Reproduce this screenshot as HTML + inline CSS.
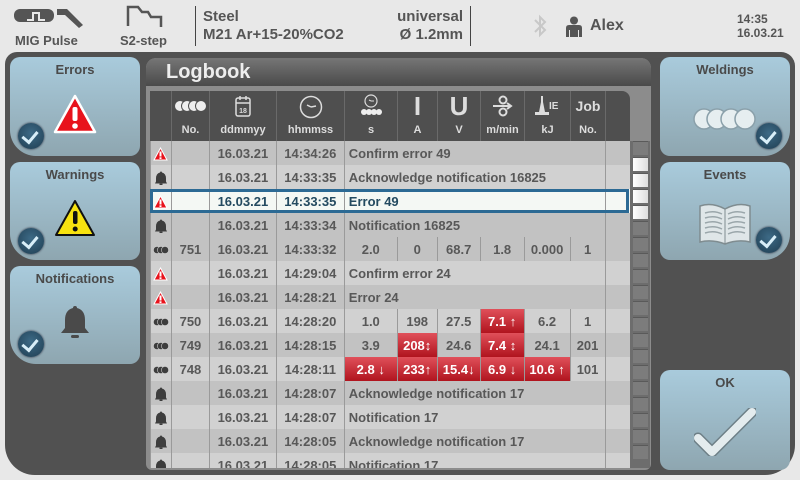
<!DOCTYPE html>
<html><head><meta charset="utf-8"><style>
*{margin:0;padding:0;box-sizing:border-box}
body{width:800px;height:480px;background:#e8e8e8;font-family:"Liberation Sans",sans-serif;font-weight:bold;color:#555;position:relative;overflow:hidden}
.a{position:absolute}
.top{font-size:15px;color:#555}
.frame{left:5px;top:52px;width:790px;height:423px;background:#515151;border-radius:12px 14px 30px 30px}
.btn{position:absolute;width:130px;background:linear-gradient(#a9cbdc,#8ea6b0);border-radius:10px 10px 10px 26px;text-align:center;font-size:13px;color:#4a4a4a;padding-top:5px}
.chk{position:absolute;width:26px;height:26px;border-radius:50%;background:radial-gradient(circle at 50% 40%,#3d6a86,#1f3e52);box-shadow:0 0 2px #223}
.chk:after{content:"";position:absolute;left:7px;top:5px;width:7px;height:12px;border:solid #d8eef8;border-width:0 3px 3px 0;transform:rotate(40deg)}
.panel{left:146px;top:58px;width:505px;height:412px;background:#8c8c8c;border-radius:10px 10px 6px 6px;overflow:hidden}
.ptitle{left:0;top:0;width:505px;height:28px;background:linear-gradient(#767676,#4a4a4a);color:#eee;font-size:20px;padding:3px 0 0 20px;border-radius:10px 10px 0 0}
table{border-collapse:collapse;table-layout:fixed}
td{height:24px;font-size:13px;text-align:center;border-left:1px solid #9a9a9a;white-space:nowrap;overflow:hidden;padding:0;color:#585858}
td.l{text-align:left;padding-left:4px}
tr.d td{background:#c2c2c2}
tr.li td{background:#d1d1d1}
tr.s td{background:#f4f8f4;color:#234a60}
td.r{background:linear-gradient(#e0505a,#b0141e)!important;color:#fff!important}
.hd{left:4px;top:33px;width:480px;height:50px;background:#4f4f4f;border-radius:0 8px 0 0;color:#ddd;font-size:11px}
.hd div{position:absolute;top:0;height:50px;border-left:1px solid #6a6a6a;text-align:center}
.hd span{position:absolute;bottom:5px;left:0;right:0}
.sb{left:484px;top:83px;width:20px;height:327px;background:#6d6d6d}
.sb i{display:block;margin:0 2px 2px 3px;height:14px;background:#7c7c7c;border-top:1px solid #5a5a5a}
.sb i.w{background:linear-gradient(90deg,#fff,#ddd)}
</style></head><body>
<svg class="a" style="left:14px;top:8px" width="72" height="20"><rect x="0" y="1" width="40" height="13" rx="6" fill="#555"/><path d="M13 12h6v-7h6v7h6" stroke="#e8e8e8" stroke-width="2" fill="none"/><path d="M43 1h10l16 16l-4 3l-14-13h-8z" fill="#555"/></svg>
<div class="a top" style="left:15px;top:33px;font-size:13px">MIG Pulse</div>
<svg class="a" style="left:126px;top:5px" width="38" height="22"><path d="M2 21V2h10l4 5h6l3 5h10v10" stroke="#555" stroke-width="2.5" fill="none"/></svg>
<div class="a top" style="left:120px;top:33px;font-size:13px">S2-step</div>
<div class="a" style="left:195px;top:6px;width:1px;height:40px;background:#444"></div>
<div class="a top" style="left:203px;top:8px;line-height:18px">Steel<br>M21 Ar+15-20%CO2</div>
<div class="a top" style="left:380px;top:8px;line-height:18px;text-align:right;width:83px">universal<br>Ø 1.2mm</div>
<div class="a" style="left:470px;top:6px;width:1px;height:40px;background:#444"></div>
<svg class="a" style="left:532px;top:14px" width="16" height="24"><path d="M3 6l10 10l-5 5V3l5 5l-10 10" stroke="#c8c8c8" stroke-width="2" fill="none"/></svg>
<svg class="a" style="left:565px;top:16px" width="18" height="21"><circle cx="9" cy="4.5" r="4" fill="#555"/><path d="M1 21V12q0-3 3-3h10q3 0 3 3v9h-3v-7h-1v7H5v-7H4v7z" fill="#555"/></svg>
<div class="a top" style="left:590px;top:17px;font-size:16px">Alex</div>
<div class="a top" style="left:737px;top:12px;font-size:12px;line-height:14px">14:35<br>16.03.21</div>

<div class="a frame"></div>
<div class="btn" style="left:10px;top:57px;height:99px">Errors
<svg class="a" style="left:43px;top:37px" width="44" height="40"><path d="M22 2L42 38H2z" fill="#e8131c" stroke="#fff" stroke-width="2.5" stroke-linejoin="round"/><rect x="19.5" y="13" width="5" height="14" rx="2" fill="#fff"/><circle cx="22" cy="32" r="2.8" fill="#fff"/></svg>
<div class="chk" style="left:8px;top:66px"></div></div>
<div class="btn" style="left:10px;top:162px;height:98px">Warnings
<svg class="a" style="left:44px;top:37px" width="42" height="38"><path d="M21 2L40 36H2z" fill="#f7e210" stroke="#111" stroke-width="2" stroke-linejoin="round"/><rect x="19" y="12" width="4.5" height="13" rx="2" fill="#111"/><circle cx="21.2" cy="30" r="2.5" fill="#111"/></svg>
<div class="chk" style="left:8px;top:66px"></div></div>
<div class="btn" style="left:10px;top:266px;height:98px">Notifications
<svg class="a" style="left:50px;top:38px" width="30" height="36"><path d="M15 2q2 0 2 2q8 2 8 12v8l4 5H1l4-5v-8q0-10 8-12q0-2 2-2z" fill="#4a4a4a"/><rect x="11" y="31" width="8" height="3" rx="1.5" fill="#4a4a4a"/></svg>
<div class="chk" style="left:8px;top:65px"></div></div>
<div class="btn" style="left:660px;top:57px;height:99px;border-radius:10px 10px 26px 10px">Weldings
<svg class="a" style="left:32px;top:50px" width="66" height="24"><g fill="#e6eef0" stroke="#8aa0aa" stroke-width="1.5"><circle cx="12" cy="12" r="10"/><circle cx="25" cy="12" r="10"/><circle cx="39" cy="12" r="10"/><circle cx="53" cy="12" r="10"/></g></svg>
<div class="chk" style="left:96px;top:66px"></div></div>
<div class="btn" style="left:660px;top:162px;height:98px;border-radius:10px 10px 26px 10px">Events
<svg class="a" style="left:38px;top:40px" width="54" height="44"><path d="M2 4q12-4 25 3q13-7 25-3v36q-12-3-25 2q-13-5-25-2z" fill="#dfe6e8" stroke="#7f8c90" stroke-width="1.5"/><path d="M27 7v35" stroke="#7f8c90"/><g stroke="#9aa6aa" stroke-width="1.5" fill="none"><path d="M7 11q9-3 17 1M7 16q9-3 17 1M7 21q9-3 17 1M7 26q9-3 17 1M7 31q9-3 17 1M30 12q8-4 17-1M30 17q8-4 17-1M30 22q8-4 17-1M30 27q8-4 17-1M30 32q8-4 17-1"/></g></svg>
<div class="chk" style="left:96px;top:65px"></div></div>
<div class="btn" style="left:660px;top:370px;height:100px;border-radius:10px">OK
<svg class="a" style="left:34px;top:38px" width="62" height="48"><path d="M4 30l14 14l40-40" stroke="#6d7f86" stroke-width="11" stroke-linecap="round" stroke-linejoin="round" fill="none"/><path d="M4 30l14 14l40-40" stroke="#e4ecee" stroke-width="8" stroke-linecap="round" stroke-linejoin="round" fill="none"/></svg></div>

<div class="a panel">
<div class="a ptitle">Logbook</div>
<div class="a hd">
<div style="left:0;width:21px;border:none"></div>
<div style="left:21px;width:38px"><svg style="margin-top:9px" width="34" height="12"><g fill="#eee" stroke="#4f4f4f"><circle cx="6" cy="6" r="5.5"/><circle cx="13" cy="6" r="5.5"/><circle cx="20" cy="6" r="5.5"/><circle cx="27" cy="6" r="5.5"/></g></svg><span>No.</span></div>
<div style="left:59px;width:67px"><svg style="margin-top:4px" width="16" height="22"><rect x="1" y="3" width="14" height="18" rx="2" fill="none" stroke="#ddd" stroke-width="1.5"/><path d="M1 8h14M5 1v4M11 1v4" stroke="#ddd" stroke-width="1.5"/><text x="8" y="18" font-size="7" fill="#ddd" text-anchor="middle" font-family="Liberation Sans">18</text></svg><span>ddmmyy</span></div>
<div style="left:126px;width:68px"><svg style="margin-top:4px" width="24" height="24"><circle cx="12" cy="12" r="10.5" fill="none" stroke="#ddd" stroke-width="1.5"/><path d="M12 12l-4-2M12 12l5-1" stroke="#ddd" stroke-width="1.5"/></svg><span>hhmmss</span></div>
<div style="left:194px;width:53px"><svg style="margin-top:3px" width="32" height="22"><circle cx="16" cy="7" r="6" fill="none" stroke="#ddd" stroke-width="1.2"/><path d="M16 7l-2-1M16 7l3 0" stroke="#ddd"/><g fill="#eee"><circle cx="9" cy="18" r="3"/><circle cx="14" cy="18" r="3"/><circle cx="19" cy="18" r="3"/><circle cx="24" cy="18" r="3"/></g></svg><span>s</span></div>
<div style="left:247px;width:40px"><b style="font-size:26px;line-height:30px;color:#ddd">I</b><span>A</span></div>
<div style="left:287px;width:43px"><b style="font-size:26px;line-height:30px;color:#ddd">U</b><span>V</span></div>
<div style="left:330px;width:44px"><svg style="margin-top:4px" width="22" height="22"><circle cx="11" cy="5" r="3.5" fill="none" stroke="#ddd" stroke-width="2"/><circle cx="11" cy="17" r="3.5" fill="none" stroke="#ddd" stroke-width="2"/><path d="M1 11h17M15 8l4 3l-4 3" stroke="#ddd" stroke-width="2" fill="none"/></svg><span>m/min</span></div>
<div style="left:374px;width:46px"><svg style="margin-top:4px" width="32" height="22"><path d="M9 1h2v6l2 10h4v3H3v-3h4l2-10z" fill="#ddd"/><text x="17" y="14" font-size="10" fill="#ddd" font-family="Liberation Sans" font-weight="bold">IE</text></svg><span>kJ</span></div>
<div style="left:420px;width:35px"><b style="font-size:14px;line-height:30px;color:#ddd">Job</b><span>No.</span></div>
<div style="left:455px;width:25px"></div>
</div>
<div class="a" style="left:4px;top:83px;width:480px;height:327px;overflow:hidden">
<table>
<colgroup><col style="width:21px"><col style="width:38px"><col style="width:67px"><col style="width:68px"><col style="width:53px"><col style="width:40px"><col style="width:43px"><col style="width:44px"><col style="width:46px"><col style="width:35px"><col style="width:25px"></colgroup>
<tr class="d"><td class="e"></td><td></td><td>16.03.21</td><td>14:34:26</td><td class="l" colspan="6">Confirm error 49</td><td></td></tr>
<tr class="li"><td class="b"></td><td></td><td>16.03.21</td><td>14:33:35</td><td class="l" colspan="6">Acknowledge notification 16825</td><td></td></tr>
<tr class="s"><td class="e"></td><td></td><td>16.03.21</td><td>14:33:35</td><td class="l" colspan="6">Error 49</td><td></td></tr>
<tr class="d"><td class="b"></td><td></td><td>16.03.21</td><td>14:33:34</td><td class="l" colspan="6">Notification 16825</td><td></td></tr>
<tr class="d"><td class="w"></td><td>751</td><td>16.03.21</td><td>14:33:32</td><td>2.0</td><td>0</td><td>68.7</td><td>1.8</td><td>0.000</td><td>1</td><td></td></tr>
<tr class="li"><td class="e"></td><td></td><td>16.03.21</td><td>14:29:04</td><td class="l" colspan="6">Confirm error 24</td><td></td></tr>
<tr class="d"><td class="e"></td><td></td><td>16.03.21</td><td>14:28:21</td><td class="l" colspan="6">Error 24</td><td></td></tr>
<tr class="li"><td class="w"></td><td>750</td><td>16.03.21</td><td>14:28:20</td><td>1.0</td><td>198</td><td>27.5</td><td class="r">7.1 ↑</td><td>6.2</td><td>1</td><td></td></tr>
<tr class="d"><td class="w"></td><td>749</td><td>16.03.21</td><td>14:28:15</td><td>3.9</td><td class="r">208↕</td><td>24.6</td><td class="r">7.4 ↕</td><td>24.1</td><td>201</td><td></td></tr>
<tr class="li"><td class="w"></td><td>748</td><td>16.03.21</td><td>14:28:11</td><td class="r">2.8 ↓</td><td class="r">233↑</td><td class="r">15.4↓</td><td class="r">6.9 ↓</td><td class="r">10.6 ↑</td><td>101</td><td></td></tr>
<tr class="d"><td class="b"></td><td></td><td>16.03.21</td><td>14:28:07</td><td class="l" colspan="6">Acknowledge notification 17</td><td></td></tr>
<tr class="li"><td class="b"></td><td></td><td>16.03.21</td><td>14:28:07</td><td class="l" colspan="6">Notification 17</td><td></td></tr>
<tr class="d"><td class="b"></td><td></td><td>16.03.21</td><td>14:28:05</td><td class="l" colspan="6">Acknowledge notification 17</td><td></td></tr>
<tr class="li"><td class="b"></td><td></td><td>16.03.21</td><td>14:28:05</td><td class="l" colspan="6">Notification 17</td><td></td></tr>
</table>
<div class="a" style="left:0;top:48px;width:479px;height:24px;border:3px solid #2c6a94"></div>
</div>
<div class="a sb"><i></i><i class="w"></i><i class="w"></i><i class="w"></i><i class="w"></i><i></i><i></i><i></i><i></i><i></i><i></i><i></i><i></i><i></i><i></i><i></i><i></i><i></i><i></i><i></i></div>
</div>
<script>
document.querySelectorAll('td.e').forEach(t=>t.innerHTML='<svg width="15" height="14" style="vertical-align:middle"><path d="M7.5 1L14 13H1z" fill="#e8131c" stroke="#fff" stroke-width="1"/><rect x="6.5" y="4.5" width="2" height="5" fill="#fff"/><rect x="6.5" y="10.3" width="2" height="1.7" fill="#fff"/></svg>');
document.querySelectorAll('td.b').forEach(t=>t.innerHTML='<svg width="12" height="14" style="vertical-align:middle"><path d="M6 0.5q1 0 1 1q4 1 4 6v3l1 2H0l1-2v-3q0-5 4-6q0-1 1-1z" fill="#3d3d3d"/><rect x="4.5" y="12.6" width="3" height="1.4" fill="#3d3d3d"/></svg>');
document.querySelectorAll('td.w').forEach(t=>t.innerHTML='<svg width="16" height="8" style="vertical-align:middle"><g fill="#3d3d3d" stroke="#ccc" stroke-width=".6"><circle cx="4" cy="4" r="3.6"/><circle cx="8" cy="4" r="3.6"/><circle cx="12" cy="4" r="3.6"/></g></svg>');
</script>
</body></html>
